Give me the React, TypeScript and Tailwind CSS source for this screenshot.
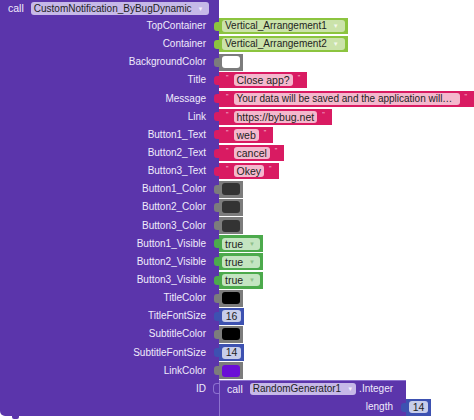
import React from "react";

type RowProps = { label: string; tab: string; children: React.ReactNode };

function Row({ label, tab, children }: RowProps) {
  return (
    <div className="flex h-[18.15px] items-center">
      <div className="flex h-full w-[219px] shrink-0 items-center justify-end bg-[#5b35ab]">
        <span className="mr-[8px] text-[10px] leading-none text-[#f0ebfb]">{label}</span>
        <span className={`h-[9px] w-[5px] rounded-l-[3px] ${tab}`} />
      </div>
      {children}
    </div>
  );
}

function Arrow({ className }: { className: string }) {
  return <span className={`ml-[6px] text-[6px] leading-none ${className}`}>▼</span>;
}

function Component({ name }: { name: string }) {
  return (
    <div className="flex h-[16px] w-[129px] items-center bg-[#8cc43f] px-[3px]">
      <div className="flex h-[12px] flex-1 items-center whitespace-nowrap rounded-[3px] bg-[#cbe3aa] px-[3px] text-[10px] leading-none text-[#1e1e1e]">
        {name}
        <Arrow className="text-[#f3f8ec]" />
      </div>
    </div>
  );
}

function Text({ value, grow }: { value: string; grow?: boolean }) {
  return (
    <div className={`flex h-[16px] items-center bg-[#d91b62] pl-[7px] pr-[7px] ${grow ? "min-w-0 flex-1" : ""}`}>
      <span className="mb-[5px] mr-[5px] text-[7px] leading-none text-[#f6c8d8]">"</span>
      <div
        className={`flex h-[12px] items-center whitespace-nowrap rounded-[3px] bg-[#f4b8cd] px-[3px] leading-none text-[#1e1e1e] ${
          grow ? "min-w-0 flex-1 overflow-hidden text-[10px]" : "text-[10.5px]"
        }`}
      >
        {value}
      </div>
      <span className="mb-[5px] ml-[5px] text-[7px] leading-none text-[#f6c8d8]">"</span>
    </div>
  );
}

function Color({ swatch }: { swatch: string }) {
  return (
    <div className="flex h-[17px] w-[24px] items-center justify-center bg-[#7c7c7c]">
      <div className={`h-[12px] w-[18px] rounded-[3px] ${swatch}`} />
    </div>
  );
}

function Bool() {
  return (
    <div className="flex h-[17px] w-[44px] items-center bg-[#4caa4c] px-[3px]">
      <div className="flex h-[12px] flex-1 items-center rounded-[3px] bg-[#c4e5c1] px-[3px] text-[10.5px] leading-none text-[#1e1e1e]">
        true
        <Arrow className="text-[#8fbf8c]" />
      </div>
    </div>
  );
}

function Num({ value }: { value: string }) {
  return (
    <div className="flex h-[17px] w-[25px] items-center bg-[#3d51b1] px-[3px]">
      <div className="flex h-[12px] flex-1 items-center justify-center rounded-[3px] bg-[#c7cdea] text-[10.5px] leading-none text-[#1e1e1e]">
        {value}
      </div>
    </div>
  );
}

export default function App() {
  return (
    <div className="relative h-[420px] w-[474px] overflow-hidden bg-white font-['Liberation_Sans',Arial,sans-serif]">
      {/* header */}
      <div className="flex h-[17px] w-[219px] items-center bg-[#5b35ab] pl-[8px]">
        <span className="mr-[7px] text-[10.5px] leading-none text-[#f0ebfb]">call</span>
        <div className="flex h-[13px] w-[178px] items-center whitespace-nowrap rounded-[3px] bg-[#c6b9e8] px-[3px] text-[10px] leading-none text-[#1e1e1e]">
          CustomNotification_ByBugDynamic
          <Arrow className="text-[#f4f0fc]" />
        </div>
      </div>

      <Row label="TopContainer" tab="bg-[#8cc43f]"><Component name="Vertical_Arrangement1" /></Row>
      <Row label="Container" tab="bg-[#8cc43f]"><Component name="Vertical_Arrangement2" /></Row>
      <Row label="BackgroundColor" tab="bg-[#7c7c7c]"><Color swatch="bg-white" /></Row>
      <Row label="Title" tab="bg-[#d91b62]"><Text value="Close app?" /></Row>
      <Row label="Message" tab="bg-[#d91b62]"><Text value="Your data will be saved and the application will…" grow /></Row>
      <Row label="Link" tab="bg-[#d91b62]"><Text value="https://bybug.net" /></Row>
      <Row label="Button1_Text" tab="bg-[#d91b62]"><Text value="web" /></Row>
      <Row label="Button2_Text" tab="bg-[#d91b62]"><Text value="cancel" /></Row>
      <Row label="Button3_Text" tab="bg-[#d91b62]"><Text value="Okey" /></Row>
      <Row label="Button1_Color" tab="bg-[#7c7c7c]"><Color swatch="bg-[#333333]" /></Row>
      <Row label="Button2_Color" tab="bg-[#7c7c7c]"><Color swatch="bg-[#333333]" /></Row>
      <Row label="Button3_Color" tab="bg-[#7c7c7c]"><Color swatch="bg-[#333333]" /></Row>
      <Row label="Button1_Visible" tab="bg-[#4caa4c]"><Bool /></Row>
      <Row label="Button2_Visible" tab="bg-[#4caa4c]"><Bool /></Row>
      <Row label="Button3_Visible" tab="bg-[#4caa4c]"><Bool /></Row>
      <Row label="TitleColor" tab="bg-[#7c7c7c]"><Color swatch="bg-black" /></Row>
      <Row label="TitleFontSize" tab="bg-[#3d51b1]"><Num value="16" /></Row>
      <Row label="SubtitleColor" tab="bg-[#7c7c7c]"><Color swatch="bg-black" /></Row>
      <Row label="SubtitleFontSize" tab="bg-[#3d51b1]"><Num value="14" /></Row>
      <Row label="LinkColor" tab="bg-[#7c7c7c]"><Color swatch="bg-[#6a0fd6]" /></Row>

      {/* ID with nested call block */}
      <div className="flex h-[36.3px]">
        <div className="flex h-full w-[219px] shrink-0 flex-col items-end rounded-bl-[5px] bg-[#5b35ab]">
          <div className="flex h-[18.15px] items-center">
            <span className="mr-[8px] text-[10px] leading-none text-[#f0ebfb]">ID</span>
            <span className="h-[9px] w-[5px] rounded-l-[3px] bg-[#5b35ab] ring-1 ring-[#8d72cf]" />
          </div>
        </div>
        <div className="flex flex-col">
          <div className="flex h-[18.15px] w-[187px] items-center border-l border-t border-[#8d72cf] bg-[#5b35ab] pl-[7px]">
            <span className="mr-[7px] text-[10.5px] leading-none text-[#f0ebfb]">call</span>
            <div className="flex h-[12px] items-center whitespace-nowrap rounded-[3px] bg-[#c6b9e8] px-[3px] text-[10px] leading-none text-[#1e1e1e]">
              RandomGenerator1
              <Arrow className="text-[#f4f0fc]" />
            </div>
            <span className="ml-[3px] text-[10px] leading-none text-[#f0ebfb]">.Integer</span>
          </div>
          <div className="flex h-[18.15px] items-center">
            <div className="flex h-full w-[187px] items-center justify-end border-l border-[#8d72cf] bg-[#5b35ab]">
              <span className="mr-[8px] text-[10px] leading-none text-[#f0ebfb]">length</span>
              <span className="h-[9px] w-[5px] rounded-l-[3px] bg-[#3d51b1]" />
            </div>
            <Num value="14" />
          </div>
        </div>
      </div>
      <div className="ml-[12px] h-[3px] w-[7px] rounded-b-[2px] bg-[#5b35ab]" />
    </div>
  );
}
